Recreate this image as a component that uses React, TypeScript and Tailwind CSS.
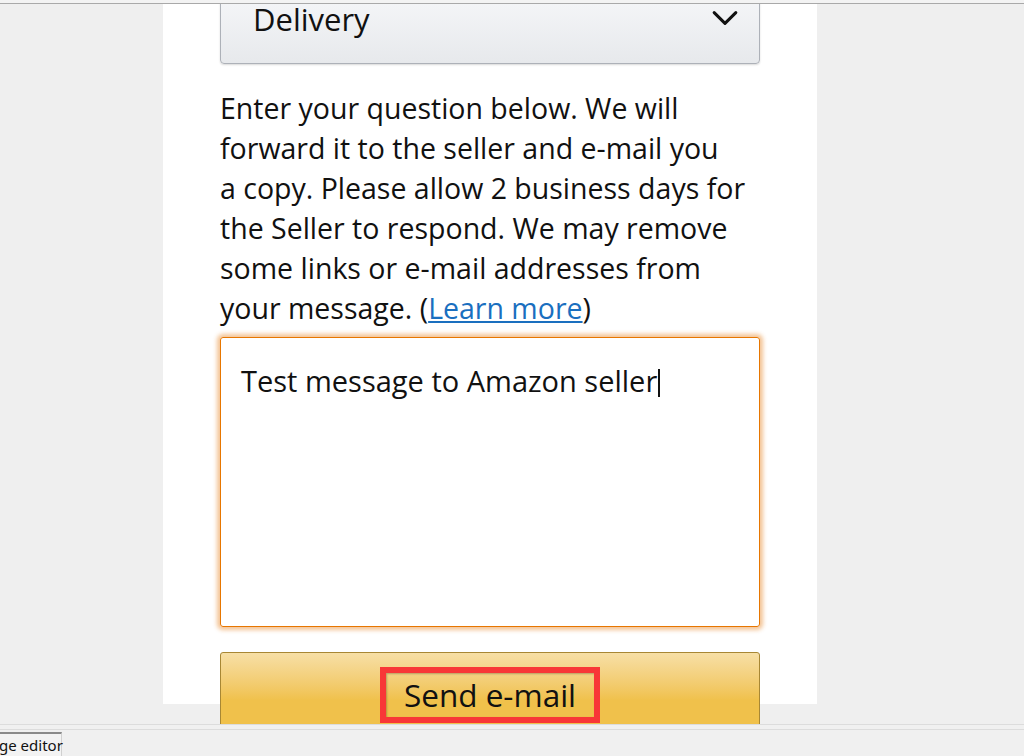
export default function App() {
	return (
		<div className="flex h-[756px] w-[1024px] flex-col overflow-hidden bg-[#efefef] font-['Open_Sans',sans-serif]">
			{/* browser chrome line */}
			<div className="h-[4px] border-b border-[#a9a9a9] bg-[#f3f3f3]" />

			{/* page */}
			<div className="flex-1 overflow-hidden">
				<div className="ml-[163px] h-full w-[654px] bg-white pl-[57px]">
					<div className="w-[540px]">
						{/* Select */}
						<div className="-mt-[20px] flex h-[80px] items-center justify-between rounded-b-[4px] border border-[#adb1b8] bg-gradient-to-b from-[#f7f8fa] to-[#e7e9ec] pl-[32px] pr-[21px] pb-[9px] shadow-[0_1px_0_rgba(255,255,255,0.6)_inset,0_1px_2px_rgba(0,0,0,0.15)]">
							<span className="text-[31px] leading-none text-[#111]">
								Delivery
							</span>
							<svg
								className="-mt-[4px] h-[26px] w-[26px] text-[#111]"
								viewBox="0 0 24 24"
								fill="none"
								stroke="currentColor"
								strokeWidth={2.8}
								strokeLinecap="round"
								strokeLinejoin="round"
							>
								<path d="M2 7l10 10 10-10" />
							</svg>
						</div>

						{/* Help text */}
						<p className="mt-[24px] whitespace-nowrap text-[28.5px] leading-[40px] text-[#111]">
							Enter your question below. We will
							<br />
							forward it to the seller and e-mail you
							<br />a copy. Please allow 2 business days for
							<br />
							the Seller to respond. We may remove
							<br />
							some links or e-mail addresses from
							<br />
							your message. (
							<a href="#" className="text-[#1a6fbf] underline">
								Learn more
							</a>
							)
						</p>

						{/* Message box */}
						<div className="mt-[9px] h-[290px] rounded-[3px] border border-[#e77600] px-[20px] pt-[23px] shadow-[0_0_4px_3px_rgba(228,121,17,0.45)]">
							<span className="text-[29px] leading-[40px] text-[#111]">
								Test message to Amazon seller
							</span>
							<span className="ml-px inline-block h-[28px] w-[2px] translate-y-[5px] bg-[#111]" />
						</div>

						{/* Submit */}
						<div className="mt-[25px] flex h-[120px] justify-center rounded-[3px] border border-[#a88734] bg-gradient-to-b from-[#f7dfa5] to-[#f0c14b] to-[40%] pt-[14px]">
							<div className="flex h-[56px] w-[220px] items-center justify-center border-[6px] border-[#f83737] shadow-[inset_1px_1px_2px_rgba(0,0,0,0.25)]">
								<span className="text-[31.5px] leading-none text-[#111]">
									Send e-mail
								</span>
							</div>
						</div>
					</div>
				</div>
			</div>

			{/* status bar */}
			<div className="h-[32px] border-t border-[#dcdcdc] bg-[#f0f0f0] pt-[4px]">
				<div className="h-px bg-[#dcdcdc]" />
				<div className="mt-[2px] flex h-[25px] w-[62px] items-center border-t-2 border-r border-t-[#8a8a8a] border-r-[#d0d0d0] bg-[#f3f3f3]">
					<span className="-ml-[1px] whitespace-nowrap font-['Noto_Sans',sans-serif] text-[15px] text-[#111]">
						ge editor
					</span>
				</div>
			</div>
		</div>
	);
}
